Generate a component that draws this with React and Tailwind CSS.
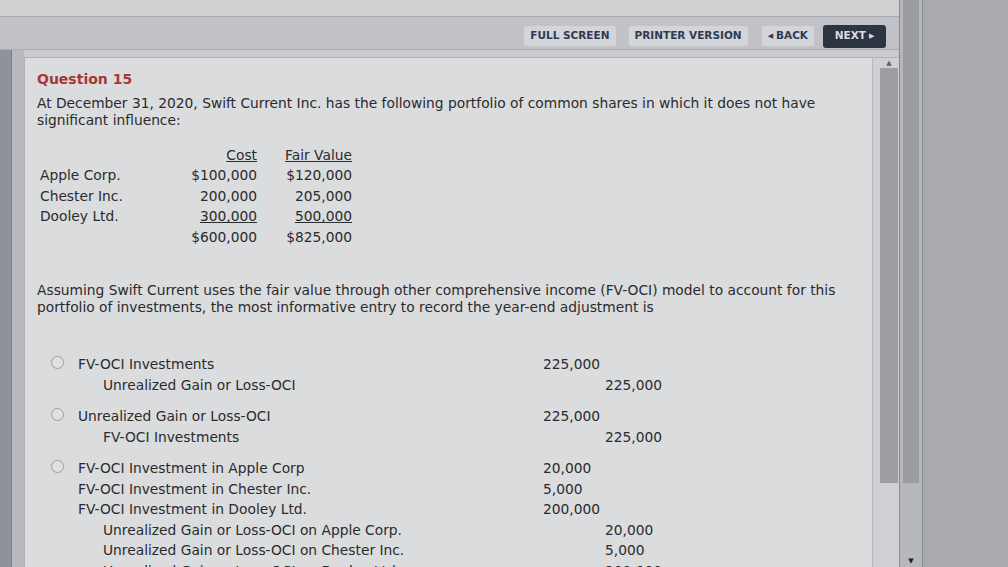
import React from 'react';

const font = { fontFamily: '"DejaVu Sans", Verdana, sans-serif' };

const Btn = ({ children, dark }) => (
  <div
    className={
      dark
        ? 'h-[23px] w-[63px] justify-center flex items-center rounded-[3px] bg-[#2d3441] text-[#d9dce2] text-[10.5px] font-bold'
        : 'h-[22px] px-[6px] flex items-center rounded-[3px] bg-[#d3d5d9] border border-[#c2c5ca] text-[#2e3a52] text-[10.5px] font-bold'
    }
  >
    {children}
  </div>
);

const Radio = () => (
  <span className="block w-[13px] h-[13px] rounded-full border border-[#9a9ca0] bg-[#dfe0e1]" />
);

const Line = ({ text, indent, dr, cr }) => (
  <div className="flex h-[20.5px] items-center whitespace-nowrap">
    <div className={indent ? 'w-[465px] pl-[25px]' : 'w-[465px]'}>{text}</div>
    <div className="w-[62px]">{dr}</div>
    <div>{cr}</div>
  </div>
);

const Option = ({ lines }) => (
  <div className="flex">
    <div className="w-[28px] pl-[1px] pt-[1px]">
      <Radio />
    </div>
    <div>
      {lines.map((l, i) => (
        <Line key={i} {...l} />
      ))}
    </div>
  </div>
);

export default function App() {
  return (
    <div className="w-[1008px] h-[567px] overflow-hidden flex bg-[#a9abb0] text-[#2a2b2e]" style={font}>
      <div className="w-[899px] h-[567px] flex flex-col shrink-0 overflow-hidden">
        <div className="h-[17px] shrink-0 bg-[#cfd0d2] border-b border-[#a7a9ae]" />
        <div className="h-[33px] shrink-0 bg-[#c0c2c7] border-b border-[#a9acb1] flex items-center justify-end pr-[13px] pt-[6px]">
          <Btn>FULL SCREEN</Btn>
          <div className="w-[11px]" />
          <Btn>PRINTER VERSION</Btn>
          <div className="w-[12px]" />
          <Btn>
            <span className="text-[7px] mr-[3px]">◀</span>BACK
          </Btn>
          <div className="w-[8px]" />
          <Btn dark>
            NEXT<span className="text-[7px] ml-[3px]">▶</span>
          </Btn>
        </div>
        <div className="flex-1 flex min-h-0">
          <div className="w-[12px] bg-[#8f9298] border-r border-[#7d8086]" />
          <div className="w-[12px] bg-[#b8babe]" />
          <div className="flex-1 flex flex-col bg-[#c9cbce] pt-[7px]">
            <div className="flex-1 flex bg-[#dbdcdd] border-t border-l border-[#b1b3b8] overflow-hidden">
              <div className="w-[848px] shrink-0 border-r border-[#b6b8bc] pl-[12px] pt-[12px] text-[13.8px] leading-[17px]">
                <div className="text-[#a83636] font-bold text-[14px] leading-[18px]">Question 15</div>
                <div className="mt-[7px] w-[810px]">
                  At December 31, 2020, Swift Current Inc. has the following portfolio of common shares in which it does not have significant influence:
                </div>
                <div className="mt-[16px] ml-[3px]">
                  <div className="flex h-[20.5px] items-center">
                    <div className="w-[150px]" />
                    <div className="w-[67px] text-right"><span className="underline">Cost</span></div>
                    <div className="w-[95px] text-right"><span className="underline">Fair Value</span></div>
                  </div>
                  {[
                    ['Apple Corp.', '$100,000', '$120,000'],
                    ['Chester Inc.', '200,000', '205,000'],
                    ['Dooley Ltd.', '300,000', '500,000'],
                    ['', '$600,000', '$825,000'],
                  ].map(([a, b, c], i) => (
                    <div key={i} className="flex h-[20.5px] items-center">
                      <div className="w-[150px]">{a}</div>
                      <div className="w-[67px] text-right">
                        <span className={i === 2 ? 'underline' : ''}>{b}</span>
                      </div>
                      <div className="w-[95px] text-right">
                        <span className={i === 2 ? 'underline' : ''}>{c}</span>
                      </div>
                    </div>
                  ))}
                </div>
                <div className="mt-[34px] w-[820px]">
                  Assuming Swift Current uses the fair value through other comprehensive income (FV-OCI) model to account for this portfolio of investments, the most informative entry to record the year-end adjustment is
                </div>
                <div className="mt-[39px] flex flex-col gap-[11px] ml-[13px]">
                  <Option
                    lines={[
                      { text: 'FV-OCI Investments', dr: '225,000' },
                      { text: 'Unrealized Gain or Loss-OCI', indent: true, cr: '225,000' },
                    ]}
                  />
                  <Option
                    lines={[
                      { text: 'Unrealized Gain or Loss-OCI', dr: '225,000' },
                      { text: 'FV-OCI Investments', indent: true, cr: '225,000' },
                    ]}
                  />
                  <Option
                    lines={[
                      { text: 'FV-OCI Investment in Apple Corp', dr: '20,000' },
                      { text: 'FV-OCI Investment in Chester Inc.', dr: '5,000' },
                      { text: 'FV-OCI Investment in Dooley Ltd.', dr: '200,000' },
                      { text: 'Unrealized Gain or Loss-OCI on Apple Corp.', indent: true, cr: '20,000' },
                      { text: 'Unrealized Gain or Loss-OCI on Chester Inc.', indent: true, cr: '5,000' },
                      { text: 'Unrealized Gain or Loss-OCI on Dooley Ltd.', indent: true, cr: '200,000' },
                    ]}
                  />
                </div>
              </div>
              <div className="w-[26px] shrink-0 flex flex-col pl-[7px] pr-[1px] bg-[#cfd0d3]">
                <div className="h-[10px] flex items-center justify-center text-[7px] text-[#5d6066]">▲</div>
                <div className="h-[415px] bg-[#9c9ea3]" />
              </div>
            </div>
          </div>
        </div>
      </div>
      <div className="w-[24px] shrink-0 flex flex-col border-l border-[#86898f] border-r bg-[#b6b8bc] px-[3px]">
        <div className="h-[483px] bg-[#9a9ca1]" />
        <div className="flex-1 flex items-end justify-center text-[7px] text-[#222] pb-[1px]">▼</div>
      </div>
      <div className="flex-1 bg-[#a8aaaf]" />
    </div>
  );
}
